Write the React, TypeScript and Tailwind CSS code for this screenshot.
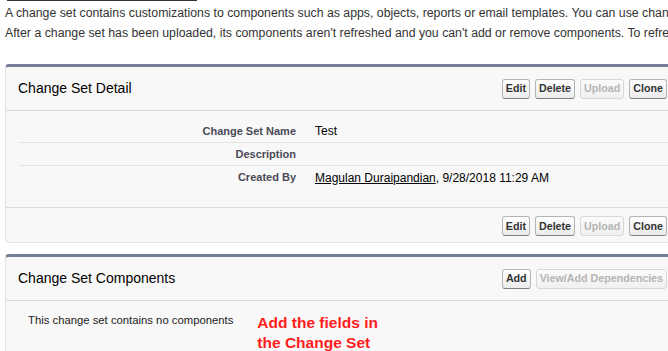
import React from "react";

type Btn = { label: string; disabled?: boolean };

function Button({ label, disabled }: Btn) {
  return (
    <button
      className={
        disabled
          ? "h-[20px] px-[3px] rounded-[3px] border border-[#d8d8d8] bg-gradient-to-b from-[#fbfbfb] to-[#f0f0f0] text-[10.7px] font-bold text-[#b5b5b5] leading-none"
          : "h-[20px] px-[3px] rounded-[3px] border border-[#b5b5b5] border-b-[#7f7f7f] bg-gradient-to-b from-white to-[#ececec] text-[10.7px] font-bold text-[#333] leading-none"
      }
    >
      {label}
    </button>
  );
}

function PanelHeader({ title, buttons }: { title: string; buttons: Btn[] }) {
  return (
    <div className="flex items-center justify-between h-[44px] pl-[12px] pr-[7px] border-b border-[#dbdbdb]">
      <h2 className="text-[14px] text-black">{title}</h2>
      <div className="flex gap-[5px]">
        {buttons.map((b) => (
          <Button key={b.label} {...b} />
        ))}
      </div>
    </div>
  );
}

const detailButtons: Btn[] = [
  { label: "Edit" },
  { label: "Delete" },
  { label: "Upload", disabled: true },
  { label: "Clone" },
];

export default function App() {
  return (
    <div className="w-[668px] h-[351px] overflow-hidden bg-white font-['Liberation_Sans',Arial,sans-serif] whitespace-nowrap">
      {/* cut-off link at the top */}
      <div className="ml-[7px] w-[190px] h-px bg-[#333]" />

      <p className="mt-[5px] ml-[5px] text-[12.3px] leading-[14px] text-[#333]">
        A change set contains customizations to components such as apps, objects, reports or email templates. You can use change sets to move customizations from one organization to another.
      </p>
      <p className="mt-[6px] ml-[5px] text-[12.3px] leading-[14px] text-[#333]">
        After a change set has been uploaded, its components aren't refreshed and you can't add or remove components. To refresh components, clone the change set.
      </p>

      {/* Detail */}
      <div className="mt-[24px] ml-[5px] w-[670px] bg-[#f8f8f8] border border-[#e0e3e5] border-t-[3px] border-t-[#747e96] rounded-[4px]">
        <PanelHeader title="Change Set Detail" buttons={detailButtons} />

        <div className="pt-[9px] pb-[18px] pl-[13px]">
          {[
            { label: "Change Set Name", value: <span>Test</span> },
            { label: "Description", value: <span /> },
            {
              label: "Created By",
              value: (
                <span>
                  <span className="underline">Magulan Duraipandian</span>, 9/28/2018 11:29 AM
                </span>
              ),
            },
          ].map((row, i) => (
            <div
              key={row.label}
              className={
                i < 2
                  ? "flex items-center h-[23px] border-b border-[#e3e3e3]"
                  : "flex items-center h-[23px]"
              }
            >
              <div className="w-[277px] text-right text-[11px] font-bold text-[#4a4a56]">
                {row.label}
              </div>
              <div className="pl-[19px] text-[12px] text-black">{row.value}</div>
            </div>
          ))}
        </div>

        <div className="flex justify-end items-start h-[35px] pt-[8px] pr-[7px] border-t border-[#dbdbdb]">
          <div className="flex gap-[5px]">
            {detailButtons.map((b) => (
              <Button key={b.label} {...b} />
            ))}
          </div>
        </div>
      </div>

      {/* Components */}
      <div className="mt-[11px] ml-[5px] w-[670px] h-[120px] bg-[#f8f8f8] border border-[#e0e3e5] border-t-[3px] border-t-[#747e96] rounded-[4px]">
        <PanelHeader
          title="Change Set Components"
          buttons={[{ label: "Add" }, { label: "View/Add Dependencies", disabled: true }]}
        />
        <div className="flex items-start pt-[12px] pl-[22px]">
          <span className="text-[11.3px] leading-[14px] text-[#222]">
            This change set contains no components
          </span>
          <div className="ml-[24px] mt-0 text-[15.5px] leading-[20px] font-bold text-[#ff1c1c]">
            Add the fields in
            <br />
            the Change Set
          </div>
        </div>
      </div>
    </div>
  );
}
